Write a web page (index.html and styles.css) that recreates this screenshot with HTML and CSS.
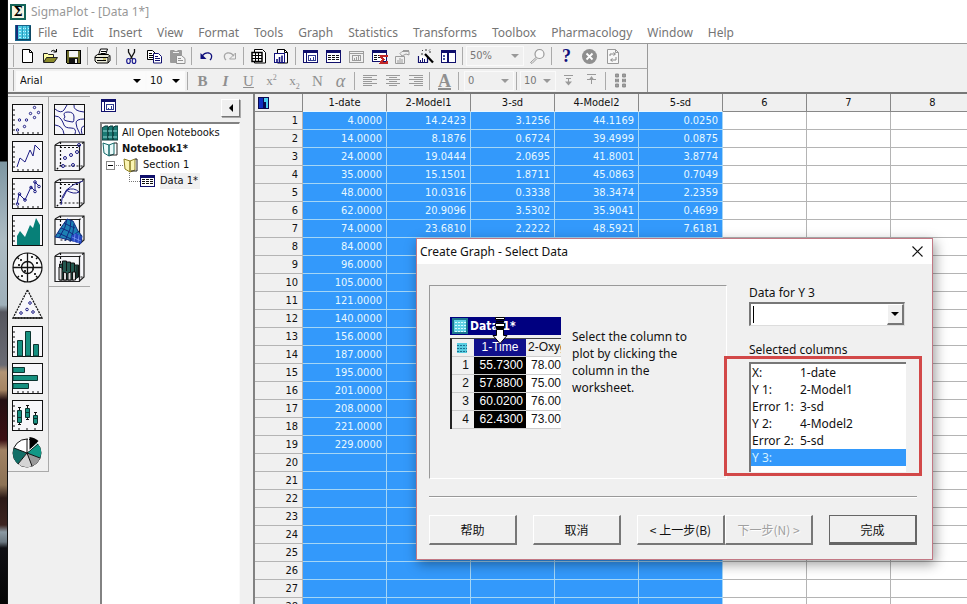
FILE: index.html
```html
<!DOCTYPE html>
<html lang="en">
<head>
<meta charset="utf-8">
<title>SigmaPlot - [Data 1*]</title>
<link rel="stylesheet" href="styles.css">
</head>
<body>
<div class="desktop" aria-hidden="true"></div>
<div class="app">
  <header class="titlebar">
    <span class="app-icon">Σ</span>
    <h1 class="app-title">SigmaPlot - [Data 1*]</h1>
  </header>
  <nav class="menubar" aria-label="Main menu">
    <svg class="doc-icon" width="16" height="16" viewBox="0 0 16 16" shape-rendering="crispEdges"><rect width="16" height="16" fill="#15638a"/><rect x="2" y="1" width="12" height="13" fill="#4cc8e4"/><rect x="1" y="0" width="2" height="15" fill="#1b2a78"/><path d="M4 3.500h10M4 6.500h10M4 9.500h10M4 12.500h10" stroke="#c2f4ff" stroke-dasharray="2 1"/><path d="M7.500 1v14M11.500 1v14" stroke="#2a9dbb"/><path d="M2 14.500h14M15.500 1v14" stroke="#0d4763"/></svg>
    <button>File</button><button>Edit</button><button>Insert</button><button>View</button><button>Format</button><button>Tools</button><button>Graph</button><button>Statistics</button><button>Transforms</button><button>Toolbox</button><button>Pharmacology</button><button>Window</button><button>Help</button>
  </nav>

  <div class="toolbars">
    <div class="toolbar" role="toolbar" aria-label="Standard">
      <button class="tool" aria-label="New"><svg width="17" height="17" viewBox="0 0 17 17"><path d="M3.500 1.500h7l3 3v10h-10zM10.500 1.500v3h3" fill="#fff" stroke="#000"/></svg></button>
      <button class="tool" aria-label="Open"><svg width="17" height="17" viewBox="0 0 17 17"><path d="M1.500 14V5.500h4l1 1h5v3" fill="#ffffa8" stroke="#222"/><path d="M1.500 14.500l3-5h11l-3.500 5z" fill="#8a8a2a" stroke="#222"/><path d="M9 3.500q2-2.500 5 0M14.500 1v3h-3" fill="none" stroke="#000"/></svg></button>
      <button class="tool" aria-label="Save"><svg width="17" height="17" viewBox="0 0 17 17" shape-rendering="crispEdges"><path d="M1.500 2.500h14v13h-13l-1-1z" fill="#6e6e2c" stroke="#000"/><rect x="4" y="3" width="9" height="6" fill="#f4f4f4"/><rect x="4" y="10" width="9" height="5" fill="#111"/><rect x="10" y="11" width="2" height="4" fill="#eee"/></svg></button>
      <span class="sep"></span>
      <button class="tool" aria-label="Print"><svg width="17" height="17" viewBox="0 0 17 17"><path d="M4.500 7l2-6h7l-2 6" fill="#fff" stroke="#000"/><path d="M7 3.500h5M6.500 5.500h5" stroke="#000"/><path d="M1 8.500l2.500-2h11l1.500 2v4l-2 2.500H3l-2-2z" fill="#e8e8d8" stroke="#000"/><path d="M1 9.500h13v5M3 12.500h9M14 9.500l2-2" fill="none" stroke="#000"/><path d="M9 11h3" stroke="#b0a000"/></svg></button>
      <span class="sep"></span>
      <button class="tool" aria-label="Cut"><svg width="17" height="17" viewBox="0 0 17 17"><path d="M5.500 1v3l4 7M11.500 1v3l-4 7" fill="none" stroke="#111" stroke-width="1.300"/><ellipse cx="5.500" cy="13" rx="1.800" ry="2.500" fill="none" stroke="#1a1a90" stroke-width="1.200"/><ellipse cx="11" cy="13" rx="1.800" ry="2.500" fill="none" stroke="#1a1a90" stroke-width="1.200"/></svg></button>
      <button class="tool" aria-label="Copy"><svg width="17" height="17" viewBox="0 0 17 17"><path d="M1.500 2.500h5l2.500 2.500v6.500h-7.500z" fill="#fff" stroke="#000"/><path d="M3 5.500h3M3 7.500h4M3 9.500h4" stroke="#000"/><path d="M7.500 5.500h5l3 3v6.500h-8z" fill="#fff" stroke="#111170"/><path d="M9 8.500h3M9 10.500h5M9 12.500h5" stroke="#111170"/></svg></button>
      <button class="tool" aria-label="Paste" disabled><svg width="17" height="17" viewBox="0 0 17 17"><rect x="1" y="2" width="12" height="13" rx="1" fill="#9a9a9a"/><path d="M4 4.500h6M5.500 2.500h3" stroke="#eee"/><path d="M7.500 7.500h5l3.500 3v5H7.500z" fill="#f4f4f4" stroke="#929292"/><path d="M9 10.500h3M9 12.500h5" stroke="#929292"/></svg></button>
      <span class="sep"></span>
      <button class="tool" aria-label="Undo"><svg width="17" height="17" viewBox="0 0 17 17"><path d="M4 8q3-4 7-3 4 1.500 2 6l-1 1" fill="none" stroke="#10107c" stroke-width="1.300"/><path d="M2.500 5v6h6z" fill="#10107c"/></svg></button>
      <button class="tool" aria-label="Redo" disabled><svg width="17" height="17" viewBox="0 0 17 17"><path d="M13 8q-3-4-7-3-4 1.500-2 6l1 1" fill="none" stroke="#a6a6a6" stroke-width="1.300"/><path d="M14.500 5v6h-6z" fill="none" stroke="#a6a6a6"/></svg></button>
      <span class="sep"></span>
      <button class="tool" aria-label="New worksheet"><svg width="17" height="17" viewBox="0 0 17 17"><path d="M4.500 1.500h8l3 3v10.500h-11z" fill="#fff" stroke="#000"/><path d="M2 4.500h10v9H2z" fill="#fff" stroke="#000" stroke-width="1.500"/><path d="M2 7.500h10M2 10.500h10M5.500 4v9.500M8.500 4v9.500" stroke="#000"/></svg></button>
      <button class="tool" aria-label="New graph page"><svg width="17" height="17" viewBox="0 0 17 17"><path d="M4.500 1.500h7l3 3v10.500h-10z" fill="#fff" stroke="#000"/><path d="M11.500 1.500v3h3" fill="none" stroke="#000"/><rect x="1.500" y="5.500" width="10" height="9" fill="#fff" stroke="#10107c"/><path d="M4 14v-3M6.500 14v-5M9 14V7.500" stroke="#10107c" stroke-width="1.600"/></svg></button>
      <span class="sep"></span>
      <button class="tool" aria-label="View notebook"><svg width="17" height="17" viewBox="0 0 17 17" shape-rendering="crispEdges"><rect x="1.500" y="2.500" width="14" height="12" fill="#fff" stroke="#10106c"/><rect x="1" y="2" width="15" height="3" fill="#10106c"/><path d="M4.500 5v9" stroke="#10106c"/><path d="M6.500 7.500h7v5h-7zM8.500 12V9.500M11.500 12V9" fill="none" stroke="#303c90"/></svg></button>
      <button class="tool" aria-label="View worksheet"><svg width="17" height="17" viewBox="0 0 17 17" shape-rendering="crispEdges"><rect x="1.500" y="2.500" width="14" height="12" fill="#fff" stroke="#10106c"/><rect x="1" y="2" width="15" height="3" fill="#10106c"/><path d="M3 7.500h3M7 7.500h3M11 7.500h3M3 9.500h3M7 9.500h3M11 9.500h3M3 11.500h3M7 11.500h3M11 11.500h3" stroke="#111"/></svg></button>
      <button class="tool" aria-label="View page" disabled><svg width="17" height="17" viewBox="0 0 17 17" shape-rendering="crispEdges"><path d="M1.500 3.500h14v11h-14zM1 5.500h15M4.500 7.500h8v5h-8zM6.500 12v-2M8.500 12V9M10.500 12V8" fill="none" stroke="#9c9c9c"/></svg></button>
      <button class="tool" aria-label="Statistics"><svg width="17" height="17" viewBox="0 0 17 17" shape-rendering="crispEdges"><rect x="1.500" y="2.500" width="14" height="11" fill="#fff" stroke="#10106c"/><rect x="1" y="2" width="15" height="3" fill="#10106c"/><path d="M3 7.500h3M7 7.500h3M11 7.500h3M3 9.500h3M7 9.500h2M3 11.500h3" stroke="#111"/><path d="M15.500 9v-1H9.500l3 3.500-3 3.500h6v-2" fill="none" stroke="#c02828" stroke-width="2"/></svg></button>
      <button class="tool" aria-label="Modify plot" disabled><svg width="17" height="17" viewBox="0 0 17 17"><path d="M1.500 8.500h9v7h-9zM4 15v-3M6 15v-5M8 15v-4M6 5.500l2-2h7v3.500l-3-1-4 2z" fill="none" stroke="#9c9c9c"/><path d="M9 2.500h6" stroke="#9c9c9c"/></svg></button>
      <button class="tool" aria-label="Graph wizard"><svg width="17" height="17" viewBox="0 0 17 17"><path d="M1.500 8v6.500h9V8.500" fill="#fff" stroke="#10106c" stroke-width="1.200"/><path d="M3.500 14v-2M5.500 14v-4M7.500 14v-3" stroke="#10106c"/><path d="M8 6l8 8.500" stroke="#000" stroke-width="2.200"/><path d="M5 2l1 1M9 1v2M12 4h2M4 6h2M13 1.500l-1 1" stroke="#333"/></svg></button>
      <button class="tool" aria-label="Property browser"><svg width="17" height="17" viewBox="0 0 17 17" shape-rendering="crispEdges"><rect x="1.500" y="2.500" width="14" height="12" fill="#fff" stroke="#10106c"/><rect x="1" y="2" width="15" height="3" fill="#10106c"/><path d="M7.500 5v9" stroke="#10106c" stroke-width="2"/><path d="M3 7.500h2M3 10.500h2" stroke="#4455a0" stroke-width="2"/></svg></button>
      <span class="sep"></span>
      <span class="combo combo-zoom"><select aria-label="Zoom" disabled><option>50%</option></select><i class="arrow"></i></span>
      <button class="tool" aria-label="Magnify" disabled><svg width="17" height="17" viewBox="0 0 17 17"><circle cx="10.500" cy="6" r="4.500" fill="#f8f8f8" stroke="#999" stroke-width="1.200"/><path d="M7 9.500l-5.500 5 1.500 1 5-5" fill="none" stroke="#999"/></svg></button>
      <span class="sep"></span>
      <button class="tool help" aria-label="Help">?</button>
      <button class="tool" aria-label="Stop" disabled><svg width="17" height="17" viewBox="0 0 17 17"><circle cx="8.500" cy="8.500" r="7.500" fill="#8f8f8f"/><path d="M5.500 5.500l6 6M11.500 5.500l-6 6" stroke="#fff" stroke-width="1.800"/></svg></button>
      <button class="tool" aria-label="Refresh" disabled><svg width="17" height="17" viewBox="0 0 17 17"><path d="M3.500 1.500h8l3 3v11h-11zM11.500 1.500v3h3" fill="#f8f8f8" stroke="#999"/><path d="M6 8V6h5M9.500 4.500l2 1.500-2 1.500M12 9v3H7M8.500 10.500L6.500 12l2 1.500" fill="none" stroke="#888"/></svg></button>
    </div>
    <div class="toolbar" role="toolbar" aria-label="Formatting">
      <span class="combo combo-font"><select aria-label="Font"><option>Arial</option></select><i class="arrow"></i></span>
      <span class="combo combo-size"><select aria-label="Font size"><option>10</option></select><i class="arrow"></i></span>
      <span class="sep"></span>
      <button class="tool glyph bold" disabled>B</button>
      <button class="tool glyph bold italic" disabled>I</button>
      <button class="tool glyph underline" disabled>U</button>
      <button class="tool glyph small" disabled><span>x<sup>2</sup></span></button>
      <button class="tool glyph small" disabled><span>x<sub>2</sub></span></button>
      <button class="tool glyph" disabled>N</button>
      <button class="tool glyph alpha" disabled>α</button>
      <span class="sep"></span>
      <button class="tool" aria-label="Align left" disabled><svg width="17" height="17" viewBox="0 0 17 17" shape-rendering="crispEdges"><path d="M2 3.500h14M2 5.500h9M2 7.500h14M2 9.500h9M2 11.500h14M2 13.500h9" stroke="#9a9a9a"/></svg></button>
      <button class="tool" aria-label="Align center" disabled><svg width="17" height="17" viewBox="0 0 17 17" shape-rendering="crispEdges"><path d="M2 3.500h14M5 5.500h8M2 7.500h14M5 9.500h8M2 11.500h14M5 13.500h8" stroke="#9a9a9a"/></svg></button>
      <button class="tool" aria-label="Align right" disabled><svg width="17" height="17" viewBox="0 0 17 17" shape-rendering="crispEdges"><path d="M2 3.500h14M7 5.500h9M2 7.500h14M7 9.500h9M2 11.500h14M7 13.500h9" stroke="#9a9a9a"/></svg></button>
      <span class="sep"></span>
      <button class="tool glyph color" disabled>A</button>
      <span class="sep"></span>
      <span class="combo combo-line"><select aria-label="Line spacing" disabled><option>0</option></select><i class="arrow"></i></span>
      <span class="sep"></span>
      <span class="combo combo-step"><select aria-label="Step" disabled><option>10</option></select><i class="arrow"></i></span>
      <button class="tool" aria-label="Space below" disabled><svg width="17" height="17" viewBox="0 0 17 17"><path d="M4 3.500h9M6 6.500h5M8.500 7v5" stroke="#9a9a9a"/><path d="M5 9.500h7l-3.500 4z" fill="#9a9a9a"/></svg></button>
      <button class="tool" aria-label="Space above" disabled><svg width="17" height="17" viewBox="0 0 17 17"><path d="M4 2.500h9M8.500 5v7M4 7.500h9" stroke="#9a9a9a"/><path d="M6 7.500h5L8.500 4z" fill="#9a9a9a"/></svg></button>
      <span class="sep"></span>
      <button class="tool" aria-label="Symbols" disabled><svg width="17" height="17" viewBox="0 0 17 17"><path d="M3 3.500h4M3 8.500h4M3 13.500h4M10 3.500h4M10 8.500h4M10 13.500h4" stroke="#929292" stroke-width="3.500"/><path d="M5 1v15M12 1v15" stroke="#aaa" stroke-dasharray="1 1"/></svg></button>
    </div>
  </div>

  <main class="workspace">
    <div class="palette palette-2d" role="toolbar" aria-label="2D graphs">
      <button aria-label="Scatter"><svg viewBox="0 0 31 31"><rect class="frame" x=".5" y=".5" width="30" height="30"/><path class="ticks" d="M1 6h2M1 11h2M1 16h2M1 21h2M1 26h2M6 30v-2M11 30v-2M16 30v-2M21 30v-2M26 30v-2"/><g class="navy"><circle cx="5.500" cy="26" r="1.200"/><circle cx="12.500" cy="22.500" r="1.200"/><circle cx="7.500" cy="16" r="1.200"/><circle cx="14.500" cy="16" r="1.200"/><circle cx="18.500" cy="9.500" r="1.200"/><circle cx="22.500" cy="13.500" r="1.200"/><circle cx="22.500" cy="3.500" r="1.200"/><circle cx="26.500" cy="8.500" r="1.200"/></g></svg></button>
      <button aria-label="Line"><svg viewBox="0 0 31 31"><rect class="frame" x=".5" y=".5" width="30" height="30"/><path class="ticks" d="M1 6h2M1 11h2M1 16h2M1 21h2M1 26h2M6 30v-2M11 30v-2M16 30v-2M21 30v-2M26 30v-2"/><path class="navy" d="M5 26l3-9 5 4 5-12 3 6 2-11 5 5"/></svg></button>
      <button aria-label="Line and scatter"><svg viewBox="0 0 31 31"><rect class="frame" x=".5" y=".5" width="30" height="30"/><path class="ticks" d="M1 6h2M1 11h2M1 16h2M1 21h2M1 26h2M6 30v-2M11 30v-2M16 30v-2M21 30v-2M26 30v-2"/><g class="navy"><path d="M5 26l2-10 6 6 6-13 4 4V4l4 4"/><circle cx="5.500" cy="26" r="1.300"/><circle cx="7.500" cy="16" r="1.300"/><circle cx="13" cy="22" r="1.300"/><circle cx="19" cy="9.500" r="1.300"/><circle cx="23" cy="13.500" r="1.300"/><circle cx="23" cy="4" r="1.300"/><circle cx="27" cy="8.500" r="1.300"/></g></svg></button>
      <button aria-label="Area"><svg viewBox="0 0 31 31"><rect class="frame" x=".5" y=".5" width="30" height="30"/><path class="ticks" d="M1 6h2M1 11h2M1 16h2M1 21h2M1 26h2"/><path class="teal" d="M5 30V21l3-5 5 6 5-12 3 3 3-10 4 7v20z"/></svg></button>
      <button aria-label="Polar"><svg viewBox="0 0 31 31"><circle cx="15.500" cy="15.500" r="14.500" fill="#fafafa" stroke="#111" stroke-width="1.200"/><circle cx="15.500" cy="15.500" r="6" fill="none" stroke="#111" stroke-width="1.300"/><path d="M1 15.500h29M15.500 1v29M5 5l2 2M26 5l-2 2M5 26l2-2M26 26l-2-2" stroke="#111" stroke-width="1.300"/><path d="M6 13h2M8 8h2M19 5h2M24 11h2M12 19h2M9 24h2M22 22h2M20 17h2" stroke="#333" stroke-width="2"/></svg></button>
      <button aria-label="Ternary"><svg viewBox="0 0 31 31"><path d="M15.500 1L30 29H1z" fill="#f8f8fb" stroke="#111" stroke-dasharray="2 1" stroke-width="1.300"/><path d="M1 29h29" stroke="#111" stroke-width="1.300"/><g class="navy"><circle cx="18" cy="14" r="1.300"/><circle cx="15" cy="20.500" r="1.300"/><circle cx="9" cy="24" r="1.300"/><circle cx="21" cy="23" r="1.300"/></g></svg></button>
      <button aria-label="Vertical bar"><svg viewBox="0 0 31 31"><rect class="frame" x=".5" y=".5" width="30" height="30"/><path class="ticks" d="M1 6h2M1 11h2M1 16h2M1 21h2M1 26h2"/><path class="bar" d="M5.500 30V14.500h5V30zM13.500 30V5.500h5V30zM21.500 30V18.500h5V30z"/></svg></button>
      <button aria-label="Horizontal bar"><svg viewBox="0 0 31 31"><rect class="frame" x=".5" y=".5" width="30" height="30"/><path class="ticks" d="M6 30v-2M11 30v-2M16 30v-2M21 30v-2M26 30v-2"/><path class="bar" d="M1 4.500h11.500v5H1zM1 12.500h24.500v5H1zM1 20.500h15.500v5H1z"/></svg></button>
      <button aria-label="Box plot"><svg viewBox="0 0 31 31"><rect class="frame" x=".5" y=".5" width="30" height="30"/><path class="ticks" d="M1 6h2M1 11h2M1 16h2M1 21h2M1 26h2M7 30v-2M15 30v-2M23 30v-2"/><path d="M7.500 7v18M15.500 5v14M23.500 12v13M6 7.500h3M6 24.500h3M14 5.500h3M14 19.500h3M22 12.500h3M22 24.500h3" stroke="#111"/><path class="bar" d="M5.500 10.500h4v12h-4zM13.500 8.500h4v9h-4zM21.500 15.500h4v8h-4zM5.500 17.500h4M13.500 12.500h4M21.500 18.500h4"/></svg></button>
      <button aria-label="Pie"><svg viewBox="0 0 31 31"><circle cx="15" cy="16" r="14" fill="#fff" stroke="#111"/><path d="M15 16L2 11A14 14 0 0 0 6 27z" fill="#126e66"/><path d="M15 16L6 27A14 14 0 0 0 20 29z" fill="#d4d4d4"/><path d="M15 16l5 13a14 14 0 0 0 8-8z" fill="#9a9a9a"/><path d="M15 16l13 5a14 14 0 0 0-3-15z" fill="#129886"/><path d="M17.500 13V0a15 15 0 0 1 9 4z" fill="#000"/><path d="M15 16V2M15 16L2 11M15 16L6 27M15 16l5 13M15 16l13 5M15 16L26 7" stroke="#111" fill="none"/><path d="M16.500 1v13L27 5" stroke="#fff" fill="none"/></svg></button>
    </div>
    <div class="palette palette-3d" role="toolbar" aria-label="3D graphs">
      <button aria-label="Contour"><svg viewBox="0 0 31 31"><rect class="frame" x=".5" y=".5" width="30" height="30"/><path class="navy" d="M1 5q6 5 9 1l3-5M11 13q-3-5 3-5t6 5-1 5-6-1-2-4M20 1q-1 6 10 7M1 12q4 0 6 3t3 6 7 3 4 6M1 21q8 1 9 9M30 15q-8 0-8 4t4 11M30 22q-4 1-2 8"/></svg></button>
      <button aria-label="3D scatter"><svg viewBox="0 0 31 31"><path class="cube" d="M1 4.500h24.500V29.500H1zM1 4L6 1h24v24l-5 4.500"/><path class="dash" d="M6.500 1v24H30M6 6.500h20M25 5l5-4M7 24l-5 5"/><g class="navy"><circle cx="11" cy="17" r="1.500"/><circle cx="17" cy="14" r="1.500"/><circle cx="23" cy="11" r="1.500"/><circle cx="25" cy="4" r="1.500"/><circle cx="9" cy="25" r="1.500"/><circle cx="19" cy="24" r="1.500"/></g></svg></button>
      <button aria-label="3D line"><svg viewBox="0 0 31 31"><path class="cube" d="M1 4.500h24.500V29.500H1zM1 4L6 1h24v24l-5 4.500"/><path class="dash" d="M6.500 1v24H30M6 6.500h20M25 5l5-4M7 24l-5 5"/><path class="navy" d="M7 27q0-18 22-24M12 12q8 5 13 2-5-5-12-2l-4 8"/></svg></button>
      <button aria-label="Mesh"><svg viewBox="0 0 31 31"><path class="cube" d="M1 4.500h24.500V29.500H1zM1 4L6 1h24v24l-5 4.500"/><path class="dash" d="M6.500 1v24H30M25 5l5-4"/><path d="M1 22L6 14l7-10 6 2 5 10 4 5-1 7-8-2-12-3z" fill="#1d80b4" stroke="#102a80"/><path d="M4 18l7 3 8 4 8-5M7 13l7 3 6 4 5-4M10 8l6 3 5 2M13 4l-2 8-6 11M17 5l-1 9-5 12M20 9l-1 8-3 10" stroke="#102a80" fill="none"/><path d="M17 21l5-3 6 4-1 7-9-3z" fill="#2444c0"/><path d="M18 22l9 4M21 19l-1 8M25 20l-1 8" stroke="#90b0ff" stroke-width=".6"/></svg></button>
      <button aria-label="3D bar"><svg viewBox="0 0 31 31"><path class="cube" d="M1 4.500h24.500V29.500H1zM1 4L6 1h24v24l-5 4.500"/><path class="dash" d="M6.500 1v24H30M25 5l5-4"/><path d="M5.500 17v-5h3v-3h4v1h4v1h4v2h4v12l-5 3H6z" fill="#22574e" stroke="#111"/><path d="M8.500 12v6M12.500 10v9M16.500 11v9M20.500 13v12M23 14v11" stroke="#111"/><path d="M5 28V15l3 1v12zM9.500 28v-8l3 1v7zM14 28v-7l3-1v8zM18.500 28v-8h3v8z" fill="#dadada" stroke="#111"/></svg></button>
    </div>

    <aside class="notebooks">
      <div class="notebooks-head">
        <svg width="16" height="14" viewBox="0 0 16 14" shape-rendering="crispEdges"><rect x=".5" y=".5" width="14" height="12" fill="#fff" stroke="#10106c"/><rect width="15" height="3" fill="#10106c"/><path d="M3.500 3v9" stroke="#10106c"/><path d="M5.500 5.500h7v5h-7zM7.500 10V8.500M10.500 10V7" fill="none" stroke="#303c90"/></svg>
        <button class="collapse" aria-label="Collapse"><svg width="6" height="8" viewBox="0 0 6 8"><path d="M5 0v8L1 4z"/></svg></button>
      </div>
      <ul class="tree">
        <li class="row"><svg width="16" height="16" viewBox="0 0 16 16"><path d="M0 3l3-2h3v14H0zM6 3l2-2h3v14H6zM11 3l2-2h3v14h-5z" fill="#1b7a74" stroke="#0a3a3a"/><path d="M1 6h4M6 6h4M11 6h4M1 12h4M6 12h4M11 12h4" stroke="#9adada"/></svg><span>All Open Notebooks</span></li>
        <li class="row current"><svg width="16" height="16" viewBox="0 0 16 16"><path d="M1 2l6 2v11l-5-3zM7 4l5-2v11l-5 2z" fill="#eafafa" stroke="#156a6a"/><path d="M12 2h3v12H8" fill="none" stroke="#222"/></svg><span>Notebook1*</span></li>
        <li class="row level-1"><svg class="expander" width="17" height="16" viewBox="0 0 17 16" shape-rendering="crispEdges"><rect x=".5" y="4.500" width="8" height="8" fill="#fff" stroke="#888"/><path d="M2 8.500h5" stroke="#000"/><path d="M10 8.500h7" stroke="#777" stroke-dasharray="1 1"/></svg><svg width="16" height="16" viewBox="0 0 16 16"><path d="M1 2l6 2v11l-5-3zM7 4l5-2v11l-5 2z" fill="#fbf5b4" stroke="#8a7d20"/><path d="M12 2h2v12H8" fill="none" stroke="#222"/></svg><span>Section 1</span></li>
        <li class="row level-2"><svg width="11" height="16" viewBox="0 0 11 16" shape-rendering="crispEdges"><path d="M.5 0v8.500H11" fill="none" stroke="#777" stroke-dasharray="1 1"/></svg><svg width="16" height="16" viewBox="0 0 16 16" shape-rendering="crispEdges"><rect x=".5" y="2.500" width="14" height="11" fill="#fff" stroke="#10106c"/><rect y="2" width="15" height="3" fill="#10106c"/><path d="M2 6.500h3M6 6.500h3M10 6.500h3M2 8.500h3M6 8.500h3M10 8.500h3M2 10.500h3M6 10.500h3M10 10.500h3" stroke="#111"/></svg><span class="chosen">Data 1*</span></li>
      </ul>
    </aside>

    <section class="sheet" aria-label="Worksheet">
      <table>
        <colgroup><col class="col-num"><col span="8" class="col-data"></colgroup>
        <thead><tr>
          <th class="corner"><svg width="11" height="12" viewBox="0 0 11 12" shape-rendering="crispEdges"><rect width="11" height="12" fill="#0a0a50"/><rect x="1" y="1" width="4" height="10" fill="#1030c0"/><path d="M6 1h4v10H8V5H6z" fill="#50d0f0"/></svg></th>
          <th class="sel">1-date</th><th class="sel">2-Model1</th><th class="sel">3-sd</th><th class="sel">4-Model2</th><th class="sel">5-sd</th><th>6</th><th>7</th><th>8</th>
        </tr></thead>
        <tbody id="rows"></tbody>
      </table>
    </section>
  </main>

  <div class="dialog" role="dialog" aria-labelledby="dialog-title">
    <div class="dialog-title">
      <h2 id="dialog-title">Create Graph - Select Data</h2>
      <button class="close" aria-label="Close"><svg width="11" height="11" viewBox="0 0 11 11"><path d="M.5 .5l10 10M10.500 .5l-10 10" stroke="#111" stroke-width="1.100"/></svg></button>
    </div>
    <div class="dialog-body">
      <div class="hint">
        <div class="preview">
          <div class="preview-title"><svg width="16" height="16" viewBox="0 0 16 16" shape-rendering="crispEdges"><rect width="16" height="16" fill="#1d7890"/><rect x="2" y="2" width="12" height="12" fill="#62d2e6"/><path d="M3 4.500h11M3 7.500h11M3 10.500h11M3 13.500h11" stroke="#d8faff" stroke-dasharray="2 1"/></svg><b>Data 1*</b></div>
          <table>
            <tr><th><svg width="12" height="12" viewBox="0 0 12 12"><rect x="1" y="1" width="10" height="10" fill="#58cce0"/><path d="M1 3.500h10M1 6.500h10M1 9.500h10" stroke="#1a6f90" stroke-dasharray="2 1"/></svg></th><th class="picked">1-Time</th><th class="next">2-Oxyg</th></tr>
            <tr><th>1</th><td class="picked">55.7300</td><td>78.00</td></tr>
            <tr><th>2</th><td class="picked">57.8800</td><td>75.00</td></tr>
            <tr><th>3</th><td class="picked">60.0200</td><td>76.00</td></tr>
            <tr><th>4</th><td class="picked">62.4300</td><td>73.00</td></tr>
          </table>
          <svg class="pointer" width="16" height="28" viewBox="0 0 16 28"><path d="M3.500 .5h9v2h-9zM3.500 6.500h9v3h-9zM4.500 12.500h7v6h3.500L8 26.500 1 18.500h3.500z" fill="#fff" stroke="#000"/><path d="M4 4.500h8M4 11h8" stroke="#000" stroke-width="2"/></svg>
        </div>
        <p>Select the column to plot by clicking the column in the worksheet.</p>
      </div>
      <div class="fields">
        <label for="data-for">Data for Y 3</label>
        <div class="combobox"><input id="data-for" type="text"><span class="caret"></span><button aria-label="Show columns"><i class="arrow"></i></button></div>
        <span class="list-label" id="list-label">Selected columns</span>
        <div class="highlight">
          <ul class="listbox" role="listbox" aria-labelledby="list-label">
            <li role="option"><span>X:</span><span>1-date</span></li>
            <li role="option"><span>Y 1:</span><span>2-Model1</span></li>
            <li role="option"><span>Error 1:</span><span>3-sd</span></li>
            <li role="option"><span>Y 2:</span><span>4-Model2</span></li>
            <li role="option"><span>Error 2:</span><span>5-sd</span></li>
            <li role="option" aria-selected="true"><span>Y 3:</span><span></span></li>
          </ul>
        </div>
      </div>
    </div>
    <div class="dialog-actions">
      <button>帮助</button>
      <button>取消</button>
      <div class="pair"><button>&lt; 上一步(B)</button><button disabled>下一步(N) &gt;</button></div>
      <button class="default">完成</button>
    </div>
  </div>
</div>
<script src="script.js"></script>
</body>
</html>
```
FILE: styles.css
```css
* { box-sizing: border-box; }

body {
  margin: 0;
  height: 100vh;
  display: flex;
  overflow: hidden;
  background: #f0f0f0;
  color: #111;
  font: 11px/16px "DejaVu Sans Condensed", "Noto Sans", sans-serif;
}

button, select, input { font: inherit; color: inherit; margin: 0; padding: 0; border: 0; background: none; border-radius: 0; }
ul { list-style: none; margin: 0; padding: 0; }
h1, h2, p { margin: 0; font-weight: 400; }
svg { display: block; flex: none; }

.desktop {
  flex: 0 0 8px;
  border-right: 1px solid #111;
  background: linear-gradient(#000 0 161px, #7d96a2 162px, #aebcc4 240px, #9fb0ba 305px, #55565e 312px, #6a6b74 365px, #b29474 372px, #a58463 390px, #230f12 400px, #3c1013 440px, #a18264 450px, #8c7255 485px, #2b1a17 498px, #3c2420 525px, #8b99a2 532px, #6b7780 542px, #101014 548px, #050505);
}

.app { flex: 1; min-width: 0; display: flex; flex-direction: column; position: relative; }

/* Title and menu */
.titlebar { height: 23px; display: flex; align-items: center; gap: 5px; padding-left: 2px; background: #fff; }
.app-icon { width: 16px; height: 16px; border: 2px solid #146458; background: #f4f4e4; color: #000; font: bold 13px/12px "DejaVu Serif", serif; text-align: center; }
.app-title { font: 12px/20px "Noto Sans", sans-serif; color: #989898; }
.menubar { height: 20px; display: flex; align-items: center; gap: 15px; padding-left: 7px; background: #fff; font: 12px/18px "Noto Sans", sans-serif; color: #757575; }
.menubar .doc-icon { margin-right: -8px; }

/* Toolbars */
.toolbars { border-top: 1px solid #999; border-bottom: 2px solid #777; }
.toolbar { height: 24px; width: max-content; min-width: 640px; display: flex; align-items: center; padding-left: 8px; border-right: 1px solid #999; position: relative; }
.toolbar + .toolbar { border-top: 1px solid #aaa; }
.toolbar::before { content: ""; position: absolute; left: 5px; top: 1px; bottom: 1px; width: 1px; background: #aaa; }
.tool { width: 23px; height: 22px; display: flex; align-items: center; justify-content: center; }
.sep { width: 1px; height: 18px; margin: 0 3px 0 2px; background: #aaa; }
.help { font: bold 18px/20px "Liberation Serif", serif; color: #10107c; }
.glyph { font: 15px/20px "Liberation Serif", serif; color: #8f8f8f; }
.glyph.bold { font-weight: 700; }
.glyph.italic { font-style: italic; }
.glyph.alpha { font-style: italic; font-size: 18px; }
.glyph.underline { text-decoration: underline; }
.glyph.small { font-size: 13px; }
.glyph sup, .glyph sub { font-size: 8px; line-height: 8px; }
.glyph.color { font-weight: 700; font-size: 18px; text-decoration: underline; text-decoration-thickness: 2px; }

.combo { display: grid; align-items: center; height: 20px; border: 1px solid #fafafa; }
.combo > * { grid-area: 1 / 1; }
.combo select { appearance: none; width: 100%; height: 18px; padding-left: 3px; color: #111; opacity: 1; }
.combo select:disabled { color: #777; }
.combo .arrow { justify-self: end; margin-right: 4px; pointer-events: none; }
.combo select:disabled + .arrow { border-top-color: #999; }
.arrow { width: 0; height: 0; border: 4px solid transparent; border-top-color: #000; border-bottom: 0; }
.combo-font, .combo-size { background: #fbfbfb; }
.combo-font { width: 130px; }
.combo-size { width: 39px; }
.combo-zoom { width: 58px; margin-right: 2px; }
.combo-line { width: 50px; margin-left: 2px; }
.combo-step { width: 36px; margin-right: 1px; }

/* Workspace */
.workspace { flex: 1; min-height: 0; display: flex; align-items: flex-start; }
.palette { display: grid; gap: 6px; margin-top: 2px; padding: 7px 5px 3px 4px; border: 1px solid #aaa; border-width: 1px 1px 1px 0; }
.palette button { width: 31px; height: 31px; }
.palette-3d { width: 41px; padding-left: 5px; border-right: 0; }
.palette svg { width: 31px; height: 31px; fill: none; }
.frame { fill: #f7f7fa; stroke: #111; stroke-width: 1; }
.ticks { stroke: #111; }
.navy { stroke: #1c1c84; fill: none; stroke-width: 1; }
.teal { fill: #078078; }
.bar { fill: #169080; stroke: #0c3430; }
.cube { fill: #f7f7fa; stroke: #222; stroke-width: 1.2; }
.dash { stroke: #111; stroke-dasharray: 2 2; stroke-width: 1.2; }

.notebooks { align-self: stretch; flex: 0 0 140px; display: flex; flex-direction: column; margin-left: 10px; }
.notebooks-head { height: 28px; display: flex; align-items: flex-start; justify-content: space-between; padding: 5px 0 0 1px; }
.collapse { width: 19px; height: 18px; display: grid; place-items: center; border: 1px solid #fff; border-right-color: #777; border-bottom-color: #777; box-shadow: 1px 1px #aaa; }
.tree { flex: 1; padding-top: 1px; background: #fff; border: 2px solid #828282; border-width: 2px 1px 0 2px; border-right-color: #fafafa; }
.row { display: flex; align-items: center; gap: 4px; height: 16px; white-space: nowrap; }
.row.current { font-weight: 700; }
.level-1 { padding-left: 4px; }
.level-1 .expander, .level-2 svg:first-child { margin-right: -4px; }
.level-2 { padding-left: 27px; }
.chosen { background: #f0f0f0; padding-right: 2px; }

.sheet { align-self: stretch; flex: 1; min-width: 0; overflow: hidden; margin-left: 13px; background: #fff; border-left: 2px solid #828282; }
.sheet table { width: 720px; table-layout: fixed; border-collapse: separate; border-spacing: 0; }
.col-num { width: 48px; }
.col-data { width: 84px; }
.sheet th, .sheet td { height: 18px; padding: 0 4px 0 0; font-weight: 400; line-height: 17px; border: 1px solid #b4b4b4; border-width: 0 1px 1px 0; }
.sheet th { background: #f0f0f0; }
.sheet thead th { padding: 0; text-align: center; border-color: #888; }
.sheet thead th.sel { border-bottom-color: #e8f8ff; }
.sheet thead .corner { padding-left: 3px; }
.sheet tbody th, .sheet td { text-align: right; }
.sheet td.sel { background: #3399fb; color: #e6f8ff; border-color: #a4d6f6; }

/* Dialog floats over the worksheet */
.dialog { position: absolute; left: 408px; top: 238px; width: 517px; background: #f0f0f0; border: 1px solid #c27884; box-shadow: 2px 4px 12px rgba(0, 0, 0, .4); font: 12px/17px "Noto Sans", "Noto Sans CJK SC", sans-serif; }
.dialog-title { display: flex; align-items: center; justify-content: space-between; height: 25px; padding: 0 9px 0 3px; background: #fff; }
.dialog-title h2 { font-size: 12px; }
.dialog-body { display: flex; gap: 22px; margin: 0 15px 0 12px; padding: 21px 0 17px; border-bottom: 1px solid #999; box-shadow: 0 1px #fff; }
.hint { flex: 1; display: flex; align-items: flex-start; gap: 11px; padding: 31px 20px 0 20px; border: 1px solid #999; border-right-color: #fff; border-bottom-color: #fff; }
.hint p { flex: 1; padding-top: 11px; }
.preview { position: relative; width: 111px; flex: none; overflow: hidden; font: 12px/17px "Liberation Sans", sans-serif; }
.preview-title { display: flex; align-items: center; gap: 2px; height: 18px; padding-left: 2px; background: #000080; color: #fff; font-family: "DejaVu Sans Condensed", sans-serif; }
.preview table { width: 120px; margin-top: 3px; table-layout: fixed; border-spacing: 0; border-left: 2px solid #222; border-top: 1px solid #444; }
.preview th, .preview td { height: 18px; padding: 0 3px 0 0; text-align: right; font-weight: 400; line-height: 17px; white-space: nowrap; border-bottom: 1px solid #ccc; }
.preview td { background: #fff; padding-right: 9px; }
.preview th:first-child { width: 22px; padding-right: 5px; }
.preview th:first-child svg { margin-left: 4px; }
.preview th.picked { width: 52px; padding: 0; text-align: center; background: #10108c; color: #fff; }
.preview th.next { text-align: left; padding-left: 2px; }
.preview td.picked { background: #000; color: #fff; padding-right: 3px; }
.preview .pointer { position: absolute; left: 42px; top: 0; }

.fields { width: 168px; display: flex; flex-direction: column; }
.fields label { line-height: 16px; }
.combobox { display: flex; position: relative; height: 24px; margin: 1px 12px 0 0; background: #fff; border: 2px solid #777; border-right: 1px solid #ddd; border-bottom: 1px solid #ddd; }
.combobox input { flex: 1; min-width: 0; padding-left: 3px; outline: 0; }
.combobox button { width: 17px; display: grid; place-items: center; background: #f0f0f0; border: 1px solid #fff; border-right: 2px solid #777; border-bottom: 2px solid #777; }
.combobox .caret { position: absolute; left: 2px; top: 2px; bottom: 2px; width: 1px; background: #000; }
.list-label { margin-top: 15px; }
.highlight { width: 198px; height: 120px; margin: -2px 0 3px -25px; padding: 3px 13px 0 22px; border: 3px solid #d24848; }
.listbox { height: 110px; background: #fff; border: 2px solid #777; border-width: 2px 0 0 2px; }
.listbox li { display: grid; grid-template-columns: 48px 1fr; padding-left: 1px; white-space: nowrap; height: 17px; line-height: 17px; }
.listbox [aria-selected="true"] { background: #3399fb; color: #d4f2ff; }

.dialog-actions { display: flex; justify-content: space-between; margin: 18px 15px 14px 12px; }
.dialog-actions button { width: 88px; height: 30px; text-align: center; border: 1px solid #fff; border-right: 2px solid #777; border-bottom: 2px solid #777; font-family: "Noto Sans CJK SC", sans-serif; }
.dialog-actions button:disabled { color: #a0a0a0; text-shadow: 1px 1px #fff; }
.dialog-actions .default { border: 1px solid #666; border-right-width: 2px; border-bottom-width: 3px; }
.pair { display: flex; }
```
FILE: script.js
```js
const data = {
  date: [4, 14, 24, 35, 48, 62, 74, 84, 96, 105, 121, 140, 156, 187, 195, 201, 208, 221, 229],
  rest: [
    [14.2423, 3.1256, 44.1169, 0.025],
    [8.1876, 0.6724, 39.4999, 0.0875],
    [19.0444, 2.0695, 41.8001, 3.8774],
    [15.1501, 1.8711, 45.0863, 0.7049],
    [10.0316, 0.3338, 38.3474, 2.2359],
    [20.9096, 3.5302, 35.9041, 0.4699],
    [23.681, 2.2222, 48.5921, 7.6181]
  ]
};
const body = document.getElementById("rows");
for (let r = 0; r < 28; r++) {
  const row = body.insertRow();
  const head = document.createElement("th");
  head.textContent = r + 1;
  row.append(head);
  const values = [data.date[r], ...(data.rest[r] || [])];
  for (let c = 0; c < 8; c++) {
    const cell = row.insertCell();
    if (c < 5) cell.className = "sel";
    if (values[c] !== undefined) cell.textContent = values[c].toFixed(4);
  }
}
```
